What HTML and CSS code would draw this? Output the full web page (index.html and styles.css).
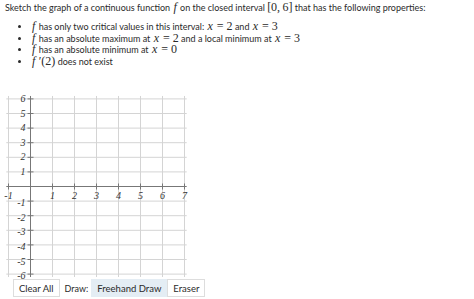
FILE: index.html
```html
<!DOCTYPE html>
<html lang="en">
<head>
    <meta charset="UTF-8">
    <title>Sketch the graph</title>
    <link rel="stylesheet" href="styles.css">
</head>
<body>
    <p class="prompt">Sketch the graph of a continuous function <i class="m">f</i> on the closed interval <span class="mr">[0,&thinsp;6]</span> that has the following properties:</p>
    <ul class="props">
        <li><i class="m">f</i> has only two critical values in this interval: <i class="m">x</i><span class="mr eq">=</span><span class="mr">2</span> and <i class="m">x</i><span class="mr eq">=</span><span class="mr">3</span></li>
        <li><i class="m">f</i> has an absolute maximum at <i class="m">x</i><span class="mr eq">=</span><span class="mr">2</span> and a local minimum at <i class="m">x</i><span class="mr eq">=</span><span class="mr">3</span></li>
        <li><i class="m">f</i> has an absolute minimum at <i class="m">x</i><span class="mr eq">=</span><span class="mr">0</span></li>
        <li><i class="m">f</i><span class="mr">&thinsp;&prime;(2)</span> does not exist</li>
    </ul>

    <div class="board">
        <svg id="grid" width="190" height="186" viewBox="0 0 190 186"></svg>
    </div>

    <div class="tools">
        <button class="btn">Clear All</button>
        <span class="label">Draw:</span>
        <button class="btn active">Freehand Draw</button>
        <button class="btn">Eraser</button>
    </div>

    <script>
        const svg = document.getElementById("grid")
        const ox = 30.5, oy = 93.5, dx = 22, dy = 14.6
        const ns = "http://www.w3.org/2000/svg"

        function line(x1, y1, x2, y2, cls) {
            const l = document.createElementNS(ns, "line")
            l.setAttribute("x1", x1); l.setAttribute("y1", y1)
            l.setAttribute("x2", x2); l.setAttribute("y2", y2)
            l.setAttribute("class", cls)
            svg.appendChild(l)
        }
        function label(x, y, t, anchor) {
            const e = document.createElementNS(ns, "text")
            e.setAttribute("x", x); e.setAttribute("y", y)
            e.setAttribute("text-anchor", anchor)
            e.setAttribute("class", "tick-label")
            e.textContent = t
            svg.appendChild(e)
        }

        const xMin = ox - 1.1 * dx, xMax = ox + 7.1 * dx
        const yMin = oy - 6.2 * dy, yMax = oy + 6.2 * dy

        // grid
        for (let i = -1; i <= 7; i++) {
            if (i !== 0) line(ox + i * dx, yMin, ox + i * dx, yMax, "grid-line")
        }
        for (let j = -6; j <= 6; j++) {
            if (j !== 0) line(xMin, oy - j * dy, xMax, oy - j * dy, "grid-line")
        }

        // axes
        line(xMin, oy, xMax, oy, "axis")
        line(ox, yMin, ox, yMax, "axis")

        // ticks + labels
        for (let i = -1; i <= 7; i++) {
            if (i === 0) continue
            line(ox + i * dx, oy - 3, ox + i * dx, oy + 3, "axis")
            label(ox + i * dx, oy + 12, i < 0 ? "-" + Math.abs(i) : i, "middle")
        }
        for (let j = -6; j <= 6; j++) {
            if (j === 0) continue
            line(ox - 3, oy - j * dy, ox + 3, oy - j * dy, "axis")
            label(ox - 5, oy - j * dy + (j < 0 ? 5 : 3), j < 0 ? "-" + Math.abs(j) : j, "end")
        }
    </script>
</body>
</html>
```

FILE: styles.css
```css
body {
    margin: 0;
    padding: 1px 5px 0;
    font-family: 'Lato', 'DejaVu Sans', sans-serif;
    font-size: 9px;
    color: #2a2a2a;
    background: #fff;
}

.prompt {
    margin: 0 0 7px 0;
    line-height: 13px;
    white-space: nowrap;
}

.m,
.mr {
    font-family: 'Liberation Serif', serif;
    font-size: 12px;
    line-height: 0;
}

.m {
    padding: 0 1px;
}

.eq {
    padding: 0 3px;
}

.props {
    margin: 0;
    padding-left: 26px;
    line-height: 11.6px;
}

.board {
    margin-top: 26px;
    margin-left: -5px;
    height: 186px;
}

#grid {
    display: block;
    overflow: visible;
}

.grid-line {
    stroke: #d4d4d4;
    stroke-width: 1;
}

.axis {
    stroke: #777;
    stroke-width: 1;
}

.tick-label {
    font-family: 'Liberation Serif', serif;
    font-style: italic;
    font-size: 10px;
    fill: #333;
}

.tools {
    display: flex;
    align-items: center;
    margin-left: 8px;
}

.btn {
    font-family: 'Lato', 'DejaVu Sans', sans-serif;
    font-size: 9.5px;
    color: #2a2a2a;
    background: #fff;
    border: 1px solid #ddd;
    padding: 0 5px;
    height: 18px;
    margin: 0;
}

.btn.active {
    background: #e4edf4;
    border-color: #e4edf4;
}

.label {
    margin: 0 3px 0 5px;
}
```
